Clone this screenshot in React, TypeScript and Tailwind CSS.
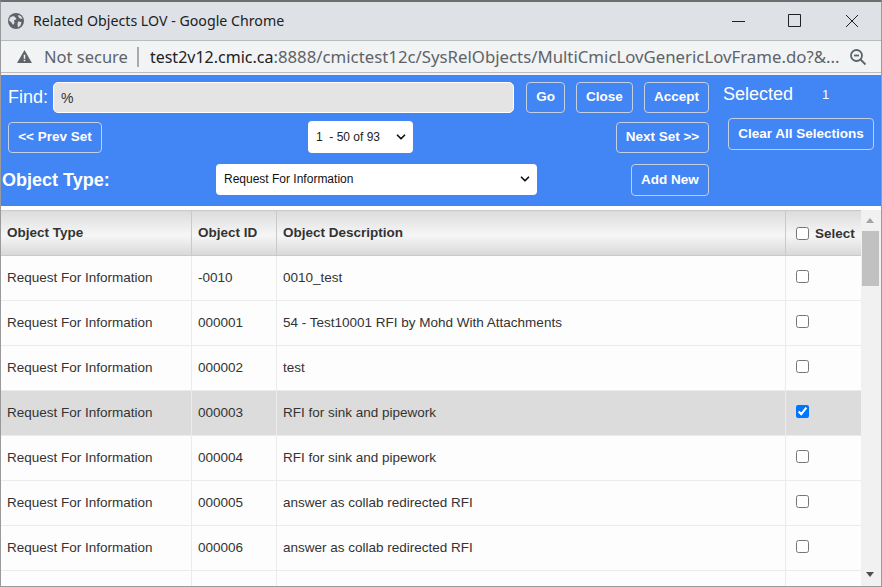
import { ChevronDown } from "lucide-react";

const rows = [
  { id: "-0010", desc: "0010_test" },
  { id: "000001", desc: "54 - Test10001 RFI by Mohd With Attachments" },
  { id: "000002", desc: "test" },
  { id: "000003", desc: "RFI for sink and pipework", checked: true },
  { id: "000004", desc: "RFI for sink and pipework" },
  { id: "000005", desc: "answer as collab redirected RFI" },
  { id: "000006", desc: "answer as collab redirected RFI" },
];

function Btn({ label, className }: { label: string; className: string }) {
  return (
    <button className={`shrink-0 rounded-[4px] border border-[#c4cfe0] text-[13.500px] font-bold text-white ${className}`}>
      {label}
    </button>
  );
}

function Globe() {
  return (
    <svg viewBox="0 0 16 16" className="h-[16px] w-[16px] shrink-0">
      <circle cx="8" cy="8" r="8" fill="#5f6368" />
      <path d="M2 4.500 5 3l2 1 1.500 2L6 7.500 6.500 10 5 12 3.500 9.500 1 7.500zM10 2l3 1 1.500 3-2.500-.5L10.500 4zM10 8.500l3.500.5-1 3.500-2.500 2-.5-3z" fill="#dee1e6" />
    </svg>
  );
}

export default function App() {
  return (
    <div className="flex h-[587px] w-[882px] flex-col overflow-hidden border border-t-[2px] border-[#9a9a9a] border-t-[#6e6e6e] bg-white font-['Liberation_Sans',sans-serif]">
      {/* chrome title bar */}
      <div className="flex h-[38px] shrink-0 items-center bg-[#dee1e6] pl-[7px] font-['Noto_Sans',sans-serif] text-[14.200px] text-[#202124]">
        <Globe />
        <span className="ml-[9px]">Related Objects LOV - Google Chrome</span>
        <svg viewBox="0 0 140 16" className="ml-auto mr-[10px] h-[16px] w-[140px]" fill="none" stroke="#202124" strokeWidth="1">
          <path d="M1 8.500h13" />
          <path d="M57.500 1.500h12v12h-12z" />
          <path d="M115 2l12 12M127 2l-12 12" />
        </svg>
      </div>
      <div className="flex h-[33px] shrink-0 items-center border-y border-[#b9bbbe] bg-[#f1f3f4] pl-[16px] font-['Noto_Sans',sans-serif] text-[16.500px]">
        <svg viewBox="0 0 16 14" className="h-[13px] w-[15px] shrink-0">
          <path d="M8 0l8 14H0z" fill="#5f6368" />
          <path d="M7.200 5h1.600v4.500H7.200zM7.200 10.500h1.600V12H7.200z" fill="#f1f3f4" />
        </svg>
        <span className="ml-[12px] pt-[1px] text-[#5f6368]">Not secure</span>
        <span className="ml-[9px] h-[20px] w-[2px] bg-[#a8abae]" />
        <span className="ml-[11px] whitespace-nowrap pt-[1px] text-[16.800px] text-[#5f6368]">
          <span className="text-[16px] text-[#202124]">test2v12.cmic.ca</span>:8888/cmictest12c/SysRelObjects/MultiCmicLovGenericLovFrame.do?&amp;...
        </span>
        <svg viewBox="0 0 18 18" className="ml-auto mr-[14px] h-[18px] w-[18px]" fill="none" stroke="#5f6368" strokeWidth="1.800">
          <circle cx="7.500" cy="7.500" r="5.500" />
          <path d="M11.500 11.500l5 5" />
          <path d="M5 7.500h5" />
        </svg>
      </div>
      <div className="h-[2px] shrink-0 bg-[#f1f3f4]" />

      {/* search panel */}
      <div className="flex h-[131px] shrink-0 flex-col bg-[#4285f4] text-white">
        <div className="ml-[7px] mt-[7px] flex h-[31px] items-center">
          <span className="w-[45px] text-[18px]">Find:</span>
          <input
            readOnly
            value="%"
            className="h-[31px] w-[461px] rounded-[5px] border border-white bg-[#e4e4e4] px-[7px] text-[14px] text-[#333]"
          />
          <Btn label="Go" className="ml-[12px] h-[31px] w-[39px]" />
          <Btn label="Close" className="ml-[11px] h-[31px] w-[57px]" />
          <Btn label="Accept" className="ml-[11px] h-[31px] w-[65px]" />
          <span className="ml-[14px] mb-[6px] text-[18px]">Selected</span>
          <span className="ml-[29px] mb-[6px] text-[13px]">1</span>
        </div>
        <div className="ml-[7px] mt-[6px] flex h-[36px] items-start">
          <Btn label="<< Prev Set" className="mt-[3px] h-[31px] w-[94px]" />
          <div className="relative ml-[206px] mt-[2px] h-[32px] w-[105px] rounded-[4px] bg-white pl-[8px] text-[12px] leading-[32px] text-[#222]">
            1 &nbsp;- 50 of 93
            <ChevronDown className="absolute right-[5px] top-[9px] h-[14px] w-[14px] text-[#111]" strokeWidth={3} />
          </div>
          <Btn label="Next Set >>" className="ml-[203px] mt-[3px] h-[31px] w-[93px]" />
          <Btn label="Clear All Selections" className="ml-[19px] mt-[-1px] h-[32px] w-[146px]" />
        </div>
        <div className="mt-[9px] flex h-[32px] items-center">
          <span className="ml-[1px] w-[214px] text-[18px] font-bold">Object Type:</span>
          <div className="relative mb-[1px] h-[31px] w-[321px] rounded-[4px] bg-white pl-[8px] text-[12px] leading-[31px] text-[#111]">
            Request For Information
            <ChevronDown className="absolute right-[5px] top-[8px] h-[14px] w-[14px] text-[#111]" strokeWidth={3} />
          </div>
          <Btn label="Add New" className="ml-[94px] h-[32px] w-[78px]" />
        </div>
      </div>

      {/* results */}
      <div className="mt-[4px] flex min-h-0 flex-1">
        <div className="w-[860px] shrink-0 overflow-hidden text-[13.500px]">
          <div className="flex h-[46px] border-y border-[#c9c9c9] bg-[linear-gradient(#dcdcdc,#f6f6f6_55%,#d9d9d9)] font-bold text-[#333]">
            <div className="flex w-[191px] items-center border-r border-[#c9c9c9] pl-[6px]">Object Type</div>
            <div className="flex w-[85px] items-center border-r border-[#c9c9c9] pl-[6px]">Object ID</div>
            <div className="flex w-[509px] items-center border-r border-[#c9c9c9] pl-[6px]">Object Description</div>
            <div className="flex flex-1 items-center pl-[10px]">
              <input type="checkbox" className="h-[13px] w-[13px]" />
              <span className="ml-[6px] pt-[2px]">Select</span>
            </div>
          </div>
          {rows.map((r) => (
            <div
              key={r.id}
              className={`flex h-[45px] border-b border-[#ebebeb] text-[#333] ${r.checked ? "bg-[#dcdcdc]" : "bg-[#fdfdfd]"}`}
            >
              <div className="flex w-[191px] items-center border-r border-[#ebebeb] pl-[6px]">Request For Information</div>
              <div className="flex w-[85px] items-center border-r border-[#ebebeb] pl-[6px]">{r.id}</div>
              <div className="flex w-[509px] items-center border-r border-[#ebebeb] pl-[6px]">{r.desc}</div>
              <div className="flex flex-1 items-center pl-[10px]">
                <input type="checkbox" readOnly checked={!!r.checked} className="mb-[3px] h-[13px] w-[13px]" />
              </div>
            </div>
          ))}
          {/* next row, only its top shows above the window edge */}
          <div className="flex h-[45px] bg-[#fdfdfd]">
            <div className="w-[191px] border-r border-[#ebebeb]" />
            <div className="w-[85px] border-r border-[#ebebeb]" />
            <div className="w-[509px] border-r border-[#ebebeb]" />
            <div className="flex flex-1 items-center pl-[10px]">
              <input type="checkbox" readOnly checked={false} className="mb-[3px] h-[13px] w-[13px]" />
            </div>
          </div>
        </div>
        {/* scrollbar */}
        <div className="relative flex-1 bg-[#f1f1f1]">
          <div className="absolute left-[5px] top-[8px] h-0 w-0 border-x-[4px] border-b-[5px] border-x-transparent border-b-[#a3a3a3]" />
          <div className="ml-[1px] mt-[21px] h-[55px] w-[17px] bg-[#c1c1c1]" />
          <div className="absolute bottom-[9px] left-[5px] h-0 w-0 border-x-[4px] border-t-[5px] border-x-transparent border-t-[#505050]" />
        </div>
      </div>
    </div>
  );
}
